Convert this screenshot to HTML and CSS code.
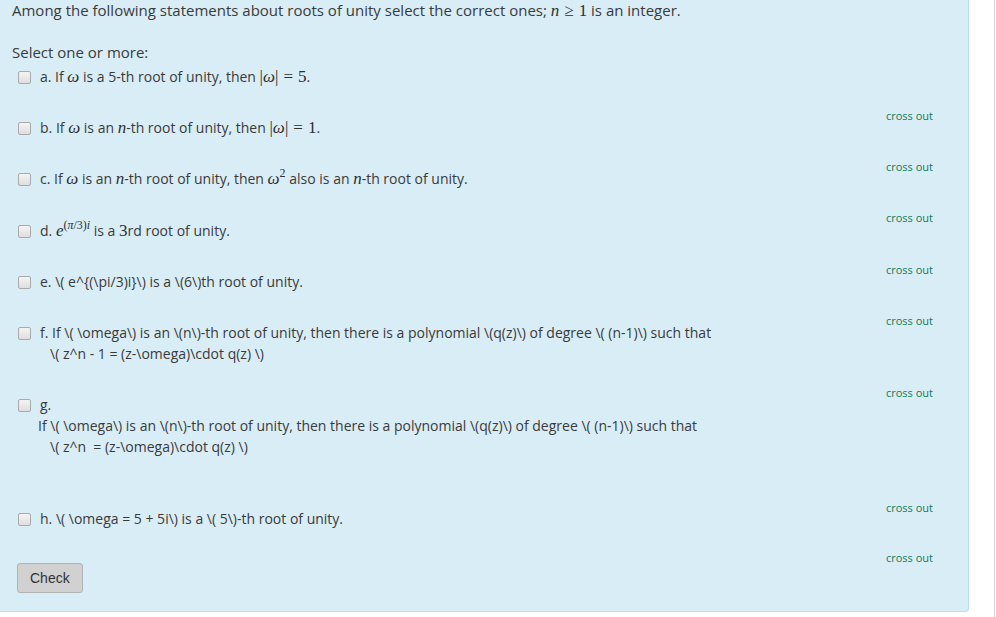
FILE: index.html
```html
<!DOCTYPE html>
<html>
<head>
<meta charset="utf-8">
<link rel="stylesheet" href="styles.css">
</head>
<body>
<div class="page">
  <div class="formulation">
    <div class="qtext">Among the following statements about roots of unity select the correct ones; <span class="m"><i>n</i><span class="rel">≥</span>1</span> is an integer.</div>
    <div class="prompt">Select one or more:</div>
    <div class="answer">
      <div class="opt">
        <div class="line"><span class="cb"></span><span class="lbl">a. If <span class="m"><i>ω</i></span> is a 5-th root of unity, then <span class="m">|<i>ω</i>|<span class="rel">=</span>5</span>.</span></div>
        <div class="cross">cross out</div>
      </div>
      <div class="opt">
        <div class="line"><span class="cb"></span><span class="lbl">b. If <span class="m"><i>ω</i></span> is an <span class="m"><i>n</i></span>-th root of unity, then <span class="m">|<i>ω</i>|<span class="rel">=</span>1</span>.</span></div>
        <div class="cross">cross out</div>
      </div>
      <div class="opt">
        <div class="line"><span class="cb"></span><span class="lbl">c. If <span class="m"><i>ω</i></span> is an <span class="m"><i>n</i></span>-th root of unity, then <span class="m"><i>ω</i><sup>2</sup></span> also is an <span class="m"><i>n</i></span>-th root of unity.</span></div>
        <div class="cross">cross out</div>
      </div>
      <div class="opt tall">
        <div class="line"><span class="cb"></span><span class="lbl">d. <span class="m"><i>e</i><sup>(<i>π</i>/3)<i>i</i></sup></span> is a <span class="m">3</span>rd root of unity.</span></div>
        <div class="cross">cross out</div>
      </div>
      <div class="opt">
        <div class="line"><span class="cb"></span><span class="lbl">e. \( e^{(\pi/3)i}\) is a \(6\)th root of unity.</span></div>
        <div class="cross">cross out</div>
      </div>
      <div class="opt">
        <div class="line"><span class="cb"></span><span class="lbl">f. If \( \omega\) is an \(n\)-th root of unity, then there is a polynomial \(q(z)\) of degree \( (n-1)\) such that<br><span class="ind">\( z^n - 1 = (z-\omega)\cdot q(z) \)</span></span></div>
        <div class="cross">cross out</div>
      </div>
      <div class="opt gopt">
        <div class="line"><span class="cb"></span><span class="lbl">g.<br><span class="back">If \( \omega\) is an \(n\)-th root of unity, then there is a polynomial \(q(z)\) of degree \( (n-1)\) such that</span><br><span class="ind pre">\( z^n  = (z-\omega)\cdot q(z) \)</span><br>&nbsp;</span></div>
        <div class="cross">cross out</div>
      </div>
      <div class="opt last">
        <div class="line"><span class="cb"></span><span class="lbl">h. \( \omega = 5 + 5i\) is a \( 5\)-th root of unity.</span></div>
        <div class="cross">cross out</div>
      </div>
    </div>
    <div class="actions"><button class="check">Check</button></div>
  </div>
</div>
</body>
</html>
```
FILE: styles.css
```css
html, body {
  margin: 0;
  padding: 0;
  background: #ffffff;
}
.page {
  width: 995px;
  height: 617px;
  border-right: 1px solid #d4d4d4;
  box-sizing: border-box;
}
.formulation {
  width: 969px;
  box-sizing: border-box;
  background: #d9edf7;
  border-right: 1px solid #b4e3f0;
  border-bottom: 1px solid #b4e3f0;
  border-bottom-right-radius: 4px;
  padding: 0 35px 18px 12px;
  font-family: "Open Sans", sans-serif;
  font-size: 14px;
  line-height: 21px;
  color: #3a3a3a;
}
.qtext {
  font-size: 15px;
  margin-bottom: 21px;
}
.prompt {
  font-size: 15px;
  margin-bottom: 3px;
}
.answer {
  padding-left: 6px;
}
.line {
  display: flex;
  align-items: flex-start;
}
.tall .line {
  padding-top: 1px;
}
.gopt .cross {
  margin-top: 24px;
  margin-bottom: -6px;
}
.cb {
  flex: none;
  width: 11px;
  height: 11px;
  margin-top: 5px;
  margin-right: 9px;
  border: 1px solid #a9a9a9;
  border-radius: 2px;
  background: linear-gradient(#f4f4f4, #dedede);
}
.lbl {
  display: block;
}
.back {
  margin-left: -2px;
}
.ind {
  padding-left: 10px;
}
.pre {
  white-space: pre;
}
.m {
  font-family: "Liberation Serif", "DejaVu Serif", serif;
  font-size: 17px;
  color: #2e2e2e;
}
.m i {
  font-style: italic;
}
.rel {
  margin: 0 5px;
}
.m sup {
  font-size: 12px;
  line-height: 0;
  vertical-align: 7px;
}
.cross {
  text-align: right;
  font-size: 11px;
  line-height: 12px;
  height: 12px;
  color: #137a55;
  margin-top: 23px;
  margin-bottom: -5px;
}
.actions {
  margin-top: 4px;
  padding-left: 5px;
}
.check {
  font-family: "Liberation Sans", Arial, sans-serif;
  font-size: 14px;
  color: #333333;
  height: 30px;
  padding: 0 12px;
  background: #d1d1d1;
  border: 1px solid #b3b3b3;
  border-radius: 3px;
}
```
